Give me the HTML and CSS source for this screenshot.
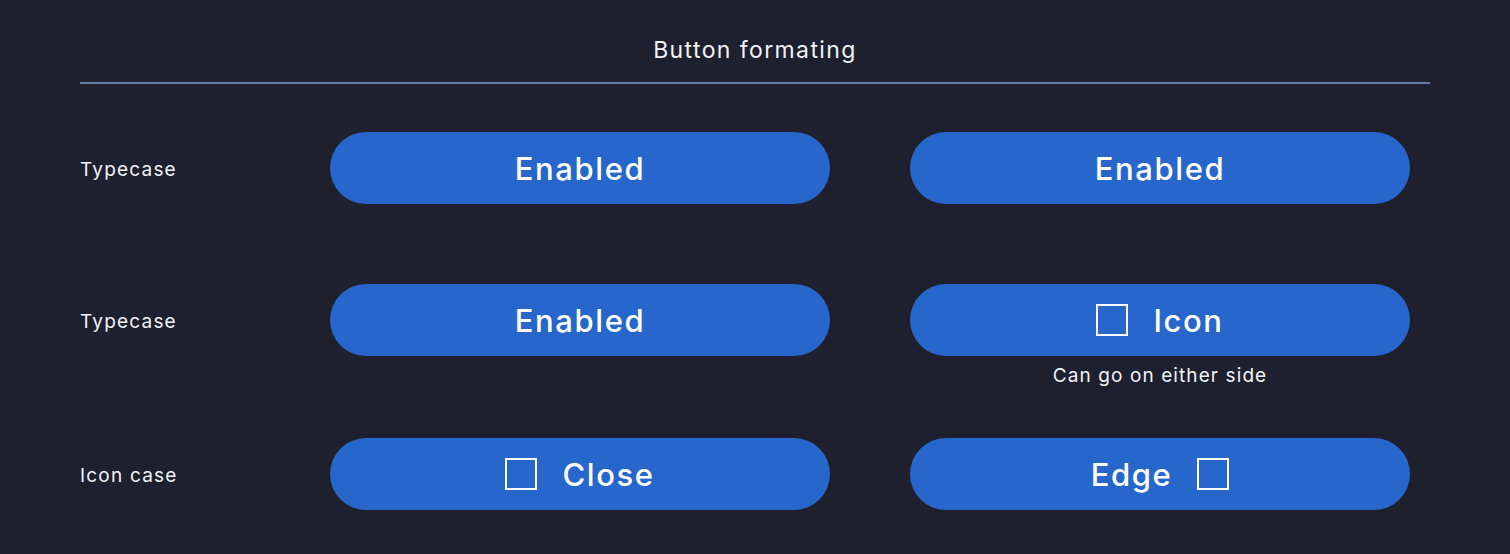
FILE: index.html
```html
<!DOCTYPE html>
<html lang="en">
<head>
    <meta charset="UTF-8">
    <meta name="viewport" content="width=device-width, initial-scale=1.0">
    <title>Button formating</title>
    <link rel="stylesheet" href="styles.css">
</head>
<body>
    <div class="page">
        <div class="title">Button formating</div>

        <div class="row first">
            <div class="label">Typecase</div>
            <div class="cell"><div class="btn">Enabled</div></div>
            <div class="cell"><div class="btn">Enabled</div></div>
        </div>

        <div class="row second">
            <div class="label">Typecase</div>
            <div class="cell"><div class="btn">Enabled</div></div>
            <div class="cell">
                <div class="btn"><span class="icon"></span>Icon</div>
                <div class="note">Can go on either side</div>
            </div>
        </div>

        <div class="row">
            <div class="label">Icon case</div>
            <div class="cell"><div class="btn"><span class="icon"></span>Close</div></div>
            <div class="cell"><div class="btn">Edge<span class="icon"></span></div></div>
        </div>
    </div>
</body>
</html>
```

FILE: styles.css
```css
body {
    margin: 0;
    background: #1f202e;
    color: #f2f2f6;
    font-family: "Inter", "Noto Sans", sans-serif;
}
.page {
    width: 1350px;
    padding: 30px 80px;
}
.title {
    text-align: center;
    font-size: 23px;
    letter-spacing: 1.4px;
    line-height: 38px;
    padding-top: 1px;
    padding-bottom: 13px;
    border-bottom: 2px solid #6a7aa6;
    margin-bottom: 48px;
}
.row {
    display: grid;
    grid-template-columns: 170px 500px 500px;
    column-gap: 80px;
    align-items: start;
}
.row.first {
    margin-bottom: 80px;
}
.row.second {
    margin-bottom: 51px;
}
.label {
    font-size: 19px;
    letter-spacing: 1.2px;
    line-height: 68px;
    padding-top: 4px;
}
.btn {
    height: 72px;
    border-radius: 36px;
    background: #2767cc;
    display: flex;
    align-items: center;
    justify-content: center;
    gap: 25px;
    font-size: 31px;
    font-weight: 500;
    letter-spacing: 1.6px;
    color: #ffffff;
}
.icon {
    width: 28px;
    height: 28px;
    border: 2px solid #ffffff;
}
.note {
    text-align: center;
    font-size: 19px;
    letter-spacing: 1.1px;
    line-height: 22px;
    margin-top: 9px;
}
```
